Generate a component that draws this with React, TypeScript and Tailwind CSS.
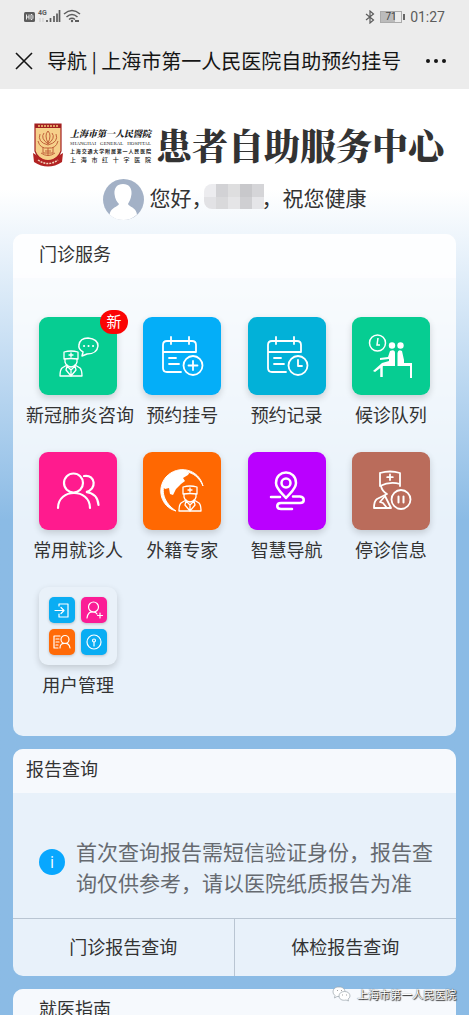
import type { ReactNode } from "react";

type Service = {
    label: string;
    color: string;
    icon: ReactNode;
    badge?: string;
};

function Doctor() {
    return (
        <g fill="none" stroke="currentColor" strokeWidth="1.3" strokeLinecap="round" strokeLinejoin="round">
            <path d="M5 2 Q12 0 19 2 V9 Q12 8 5 9 Z" />
            <path d="M6 9 V12 Q7 16 12 17 Q17 16 18 12 V9" />
            <path d="M12 3 V7 M10 5 H14" />
            <path d="M8 15 L3 18 Q1 20 1 26 H23 Q23 20 21 18 L16 15" />
            <path d="M8 16 L7 20 L12 26 L17 20 L16 16 M8 16 L12 20 L16 16 M12 20 V26" />
        </g>
    );
}

function Calendar({ children }: { children: ReactNode }) {
    return (
        <g fill="none" stroke="currentColor" strokeWidth="1.8" strokeLinecap="round" strokeLinejoin="round">
            <path d="M38 55 H24 Q20 55 20 51 V28 Q20 24 24 24 H49 Q53 24 53 28 V35 H20" />
            <path d="M28 20 V27 M46 20 V27 M26 41 H33 M26 47 H36" />
            <circle cx="50" cy="48.5" r="9.5" />
            {children}
        </g>
    );
}

const services: Service[] = [
    {
        label: "新冠肺炎咨询",
        color: "bg-[#06cd92]",
        badge: "新",
        icon: (
            <>
                <g transform="translate(20 33)"><Doctor /></g>
                <path d="M44 35 Q39 32 40 28 Q41 21 49 21 Q59 22 59 29 Q58 37 48 37 L43 39 Z" fill="none" stroke="currentColor" strokeWidth="1.5" strokeLinejoin="round" />
                <path d="M45 29 h.1 M49.500 29 h.1 M54 29 h.1" stroke="currentColor" strokeWidth="2" strokeLinecap="round" />
            </>
        ),
    },
    {
        label: "预约挂号",
        color: "bg-[#04aef8]",
        icon: <Calendar><path d="M50 44 V53 M45.500 48.500 H54.500" /></Calendar>,
    },
    {
        label: "预约记录",
        color: "bg-[#02b1d8]",
        icon: <Calendar><path d="M50 43 V49 H54" /></Calendar>,
    },
    {
        label: "候诊队列",
        color: "bg-[#06cd92]",
        icon: (
            <>
                <circle cx="25.500" cy="26" r="8" fill="none" stroke="currentColor" strokeWidth="1.500" />
                <path d="M26 21 L25 28 H28" fill="none" stroke="currentColor" strokeWidth="1.500" />
                <circle cx="40" cy="28.500" r="3.200" fill="currentColor" />
                <circle cx="48.500" cy="28.500" r="3.200" fill="currentColor" />
                <path d="M38 34 Q43 32 43 36 V49 H31 L23 55 L21 54 L30 46 L37 44 V42 L28 43 V41 L36 40 Z" fill="currentColor" />
                <path d="M45.500 36 Q46 32 50 34 L52 43 V46 H60 V61 H58 V49 H45.500 Z" fill="currentColor" />
                <path d="M29.500 49 V60" stroke="currentColor" strokeWidth="2.500" />
            </>
        ),
    },
    {
        label: "常用就诊人",
        color: "bg-[#ff1b8e]",
        icon: (
            <g fill="none" stroke="currentColor" strokeWidth="2.200" strokeLinecap="round">
                <circle cx="34.500" cy="31" r="9.500" />
                <path d="M19 56 C19 36 51 36 51 56" />
                <path d="M45 24 C57 22 58 38 47 40 C55 41 59 46 59.500 53" />
            </g>
        ),
    },
    {
        label: "外籍专家",
        color: "bg-[#ff6802]",
        icon: (
            <>
                <path d="M60 34 C56 17 35 12 23 25 C13 37 18 55 33 59 C21 51 17 39 23 28 C34 15 53 17 60 34 Z" fill="currentColor" stroke="currentColor" strokeWidth="1" />
                <path d="M20 35 Q23 20 38 18 Q49 20 45 23 L40 26 L42 29 L38 32 L33 37 L30 43 L27 42 L26 36 L22 37 Z" fill="currentColor" />
                <g transform="translate(35 33)"><Doctor /></g>
            </>
        ),
    },
    {
        label: "智慧导航",
        color: "bg-[#ba00ff]",
        icon: (
            <g fill="none" stroke="currentColor" strokeWidth="2.500" strokeLinecap="round" strokeLinejoin="round">
                <path d="M38 46 C34 41 28 37 28 31 C28 17 48 17 48 31 C48 37 42 41 38 46 Z" />
                <circle cx="38" cy="31" r="4.500" />
                <path d="M23 45 H32 M45 44.500 H52 C57 45 57 51 52 51 H33 C28 51 28 57 33 57 H44" />
            </g>
        ),
    },
    {
        label: "停诊信息",
        color: "bg-[#ba6c5b]",
        icon: (
            <g fill="none" stroke="currentColor" strokeWidth="1.800" strokeLinecap="round" strokeLinejoin="round">
                <path d="M28 21 Q38 18 48 21 V34 M28 21 V34 Q38 29 48 32" />
                <path d="M38 22.500 V28 M35.200 25.200 H40.800" />
                <path d="M29 34 Q30 39 35 42 L25 47 Q22 49 22 56 H39 L33 44" />
                <path d="M33 44 L28 50 L31 51 L35 56" />
                <circle cx="49" cy="47.500" r="9.500" />
                <path d="M46.500 44.500 V50.500 M51.500 44.500 V50.500" strokeWidth="2" />
            </g>
        ),
    },
];

const userIcons = [
    {
        name: "登录",
        color: "bg-[#0aadf3]",
        icon: <path d="M10 9 V7 H19 V20 H10 V17 M6 13.500 H15 M12 10.500 L15 13.500 L12 16.500" />,
    },
    {
        name: "添加",
        color: "bg-[#fb1c96]",
        icon: (
            <>
                <circle cx="12.500" cy="10" r="5" />
                <path d="M6 21 Q7 14 12.500 15 Q15 15 16 17 M19 16 V21 M16.500 18.500 H21.500" />
            </>
        ),
    },
    {
        name: "资料",
        color: "bg-[#ff6a08]",
        icon: (
            <>
                <circle cx="16" cy="10.500" r="4" />
                <path d="M11 19 Q11 14 16 14.500 Q20 14 21 19 M11 7 H5 V19 H9 M7 10 H10 M7 13 H10 M7 16 H9" />
            </>
        ),
    },
    {
        name: "密码",
        color: "bg-[#0aadf3]",
        icon: (
            <>
                <circle cx="13" cy="13" r="7" />
                <circle cx="13" cy="11.500" r="1.500" />
                <path d="M13 13 V17" />
            </>
        ),
    },
];

function StatusBar() {
    return (
        <div className="flex h-[34px] items-center justify-between px-6 text-[#5c5c5c]">
            <svg width="58" height="18" viewBox="0 0 58 18" fill="currentColor" aria-hidden="true">
                <rect y="4" width="11" height="10" rx="1.500" />
                <path d="M2.500 6.500 V11.500 M5 6.500 V11.500 M2.500 9 H5 M7 6.500 V11.500 H8 Q9 11 9 9 Q9 7 8 6.500 Z" fill="none" stroke="#ececec" />
                <text x="14" y="7" fontSize="7" fontWeight="700" fontFamily="Roboto, sans-serif">4G</text>
                <path d="M16 10 V14 M19 10 V14" stroke="#ccc" />
                <path d="M23 12 V14 M26.500 10 V14 M30 8 V14 M33 5.500 V14 M35.500 2 V14" stroke="currentColor" strokeWidth="1.700" />
                <g fill="none" stroke="currentColor" strokeWidth="1.500">
                    <path d="M40 6 Q48 -1 56 6 M42.500 9 Q48 4 53.500 9 M45 11.500 Q48 9 51 11.500" />
                </g>
                <circle cx="48" cy="13" r="1.200" />
                <path d="M51 13 H55" stroke="currentColor" strokeWidth="2" />
            </svg>
            <div className="flex items-center gap-[5px]">
                <svg width="10" height="14" viewBox="0 0 10 14" fill="none" stroke="currentColor" strokeWidth="1.200" aria-hidden="true">
                    <path d="M1 4 L8.500 10 L5 13 V1 L8.500 4 L1 10" />
                </svg>
                <div className="flex items-center gap-px">
                    <span className="h-[12px] w-[22px] border border-[#aaa] bg-linear-to-r from-[#bbb] from-70% to-[#ececec] to-70% text-center font-[Roboto] text-[10px] leading-[10px] text-[#444]">71</span>
                    <span className="h-[6px] w-[2px] bg-[#666]" />
                </div>
                <span className="font-[Roboto] text-[14px] leading-none">01:27</span>
            </div>
        </div>
    );
}

function TitleBar() {
    return (
        <div className="flex h-[55px] items-center pl-[15px] pr-[22px] pb-px text-[#151515]">
            <button type="button" aria-label="关闭" className="mr-[14px] shrink-0">
                <svg width="18" height="18" viewBox="0 0 18 18" stroke="currentColor" strokeWidth="1.600" aria-hidden="true">
                    <path d="M1 1 L17 17 M17 1 L1 17" />
                </svg>
            </button>
            <h1 className="flex-1 whitespace-nowrap text-[20px] leading-[28px]">导航 | 上海市第一人民医院自助预约挂号</h1>
            <button type="button" aria-label="更多" className="shrink-0">
                <svg width="22" height="6" viewBox="0 0 22 6" fill="currentColor" aria-hidden="true">
                    <circle cx="3" cy="3" r="2" />
                    <circle cx="11" cy="3" r="2" />
                    <circle cx="19" cy="3" r="2" />
                </svg>
            </button>
        </div>
    );
}

function Crest() {
    return (
        <svg width="32" height="44" viewBox="0 0 32 44" className="shrink-0" aria-hidden="true">
            <path d="M3 1 H29 V28 Q27 35 16 40 Q5 35 3 28 Z" fill="#f6d08a" stroke="#a32020" strokeWidth="1.200" />
            <path d="M3 1 H29 V5 H3 Z" fill="#a32020" />
            <path d="M6 3 H26" stroke="#f6c777" strokeWidth="1.500" strokeDasharray="2 1" />
            <g fill="none" stroke="#c0603a" strokeWidth="1">
                <path d="M16 8 Q12 12 16 20 Q20 12 16 8 M12 10 Q8 15 16 21 Q24 15 20 10 M8 11 Q5 19 16 22 Q27 19 24 11" />
                <path d="M6 18 Q8 26 16 25 Q24 26 26 18 M11 24 V30 H21 V24 M13 28 H19 M16 25 V33 M9 30 Q16 35 23 30" />
            </g>
            <path d="M1 30 L6 33 Q16 41 26 33 L31 30 L30 39 Q16 48 2 39 Z" fill="#b22222" />
            <path d="M6 37 Q16 44 26 37" fill="none" stroke="#f3d9c0" strokeWidth="1.500" strokeDasharray="2 1" />
        </svg>
    );
}

function Mosaic() {
    return (
        <span className="-ml-[9px] grid h-[25px] w-[61px] shrink-0 grid-cols-5 grid-rows-2 overflow-hidden rounded-l-lg" aria-hidden="true">
            <span className="bg-[#ececef]" />
            <span className="bg-[#d2d2d5]" />
            <span className="bg-[#dededf]" />
            <span className="bg-[#c8c8cb]" />
            <span className="bg-[#d5d5d8]" />
            <span className="bg-[#e2e2e5]" />
            <span className="bg-[#d9d9db]" />
            <span className="bg-[#e5e5e7]" />
            <span className="bg-[#cfcfd2]" />
            <span className="bg-[#e5e5e8]" />
        </span>
    );
}

function Hero() {
    return (
        <header className="pt-[28px] pb-[10px] text-[#333]">
            <div className="flex h-[56px] items-center justify-center pl-[7px]">
                <Crest />
                <div className="ml-[6px] mr-[5px] w-[81px] shrink-0 text-[#222] [text-align-last:justify]">
                    <p className="whitespace-nowrap font-['Noto_Serif_CJK_SC','Noto_Sans_CJK_SC',serif] text-[9px] leading-[13px] font-black italic">上海市第一人民醫院</p>
                    <p className="whitespace-nowrap font-['Liberation_Serif'] text-[5px] leading-[7px]">SHANGHAI GENERAL HOSPITAL</p>
                    <p className="whitespace-nowrap text-[5px] leading-[8px] font-bold">上海交通大学附属第一人民医院</p>
                    <p className="whitespace-nowrap text-[6px] leading-[9px] font-medium">上海市红十字医院</p>
                </div>
                <h2 className="whitespace-nowrap font-['Noto_Serif_CJK_SC','Noto_Sans_CJK_SC',serif] text-[36px] leading-[48px] font-black">患者自助服务中心</h2>
            </div>
            <div className="flex items-center justify-center pt-[6px] pb-[4px] text-[21px] leading-[30px]">
                <svg width="41" height="41" viewBox="0 0 41 41" className="mr-[6px] shrink-0" aria-hidden="true">
                    <circle cx="20.500" cy="20.500" r="20.500" fill="#a3b1c6" />
                    <path d="M20 5 C26 5 29 9 28.500 15 C28 20 26 23 25 25 C26 28 33 28 34 35.500 Q28 41 20.500 41 Q12 41 6.500 35.500 C8 28 15 28 16 25 C14 23 12 20 11.500 15 C11 9 14 5 20 5 Z" fill="#fff" />
                </svg>
                <div className="flex items-center pb-[6px]">
                    <span className="whitespace-nowrap">您好，</span>
                    <Mosaic />
                    <span className="-ml-[3px] whitespace-nowrap">，祝您健康</span>
                </div>
            </div>
        </header>
    );
}

function Card({ title, inset, children }: { title: string; inset?: boolean; children?: ReactNode }) {
    return (
        <section className="overflow-hidden rounded-[10px] bg-white/80">
            <h3 className={`h-[44px] bg-white/60 text-[18px] leading-[38px] ${inset ? "pl-[26px]" : "pl-[13px]"}`}>{title}</h3>
            {children}
        </section>
    );
}

function ServiceGrid() {
    return (
        <div className="grid grid-cols-4 gap-y-[19px] px-[13px] pt-[39px] pb-[33px]">
            {services.map((service) => (
                <button key={service.label} type="button" className="block min-w-0 whitespace-nowrap text-center">
                    <span className={`relative mx-auto block size-[78px] rounded-[9px] text-white shadow-[0_3px_7px_rgba(0,0,0,0.16)] ${service.color}`}>
                        <svg viewBox="0 0 78 78" className="size-full" aria-hidden="true">{service.icon}</svg>
                        {service.badge && (
                            <span className="absolute -top-[7px] -right-[11px] h-[24px] w-[28px] rounded-full bg-[#fb0505] text-center text-[15px] leading-[22px]">{service.badge}</span>
                        )}
                    </span>
                    <span className="block text-[18px] leading-[38px]">{service.label}</span>
                </button>
            ))}
            <button type="button" className="block min-w-0 whitespace-nowrap text-center">
                <span className="mx-auto grid size-[78px] grid-cols-2 place-content-center gap-[6px] rounded-[9px] bg-[#e9f1f9] px-[10px] shadow-[0_3px_7px_rgba(0,0,0,0.16)]">
                    {userIcons.map((item) => (
                        <span key={item.name} className={`block size-[26px] rounded-[5px] text-white shadow-[0_1px_3px_rgba(0,0,0,0.2)] ${item.color}`}>
                            <svg viewBox="0 0 26 26" className="size-full" fill="none" stroke="currentColor" strokeWidth="1.200" strokeLinecap="round" strokeLinejoin="round" aria-hidden="true">
                                {item.icon}
                            </svg>
                        </span>
                    ))}
                </span>
                <span className="block text-[18px] leading-[38px]">用户管理</span>
            </button>
        </div>
    );
}

function ReportQuery() {
    return (
        <>
            <div className="flex items-start gap-[11px] pt-[43px] pr-[20px] pb-[20px] pl-[26px]">
                <span className="mt-[13px] flex size-[26px] shrink-0 items-center justify-center rounded-full bg-[#08a7fe] font-['Open_Sans'] text-[16px] leading-none text-white">i</span>
                <p className="text-[21px] leading-[31px] text-[#666a70]">首次查询报告需短信验证身份，报告查询仅供参考，请以医院纸质报告为准</p>
            </div>
            <div className="grid h-[58px] grid-cols-2 border-t border-[#b9c5d2] text-[18px]">
                <button type="button" className="border-r border-[#b9c5d2] pb-[2px]">门诊报告查询</button>
                <button type="button" className="pb-[2px]">体检报告查询</button>
            </div>
        </>
    );
}

function Watermark() {
    return (
        <div className="absolute right-[13px] bottom-[13px] flex items-center gap-[6px] text-[11px] leading-[16px] text-white [text-shadow:1px_1px_1px_#222,0_0_1px_#333]">
            <svg width="19" height="16" viewBox="0 0 19 16" fill="#fff" stroke="#9aa3ab" strokeWidth="0.700" aria-hidden="true">
                <path d="M7 1 C3 1 1 3 1 6 Q1 8 3 9.500 L2.500 12 L5 10.500 Q13 11 13 6 C13 3 11 1 7 1 Z" />
                <path d="M12.500 5.500 C9 5.500 7 7.500 7 10 C7 13 10 15 14 14 L16.500 15 L16 13 Q18 12 18 10 C18 7.500 16 5.500 12.500 5.500 Z" />
                <path d="M5 4.500 h.5 M9 4.500 h.5 M10.500 9 h.5 M14 9 h.5" stroke="#444" strokeWidth="1.200" />
            </svg>
            <span className="whitespace-nowrap">上海市第一人民医院</span>
        </div>
    );
}

export default function App() {
    return (
        <div className="relative flex h-screen flex-col overflow-hidden font-['Noto_Sans_CJK_SC',sans-serif] text-[#333]">
            <div className="shrink-0 bg-[#ececec]">
                <StatusBar />
                <TitleBar />
            </div>
            <main className="min-h-0 flex-1 overflow-y-auto bg-linear-to-b from-white from-[100px] to-[#8bbbe5] to-[431px] [scrollbar-width:none]">
                <Hero />
                <div className="flex flex-col gap-[13px] px-[13px] pb-[13px]">
                    <Card title="门诊服务" inset>
                        <ServiceGrid />
                    </Card>
                    <Card title="报告查询">
                        <ReportQuery />
                    </Card>
                    <Card title="就医指南" inset />
                </div>
            </main>
            <Watermark />
        </div>
    );
}
